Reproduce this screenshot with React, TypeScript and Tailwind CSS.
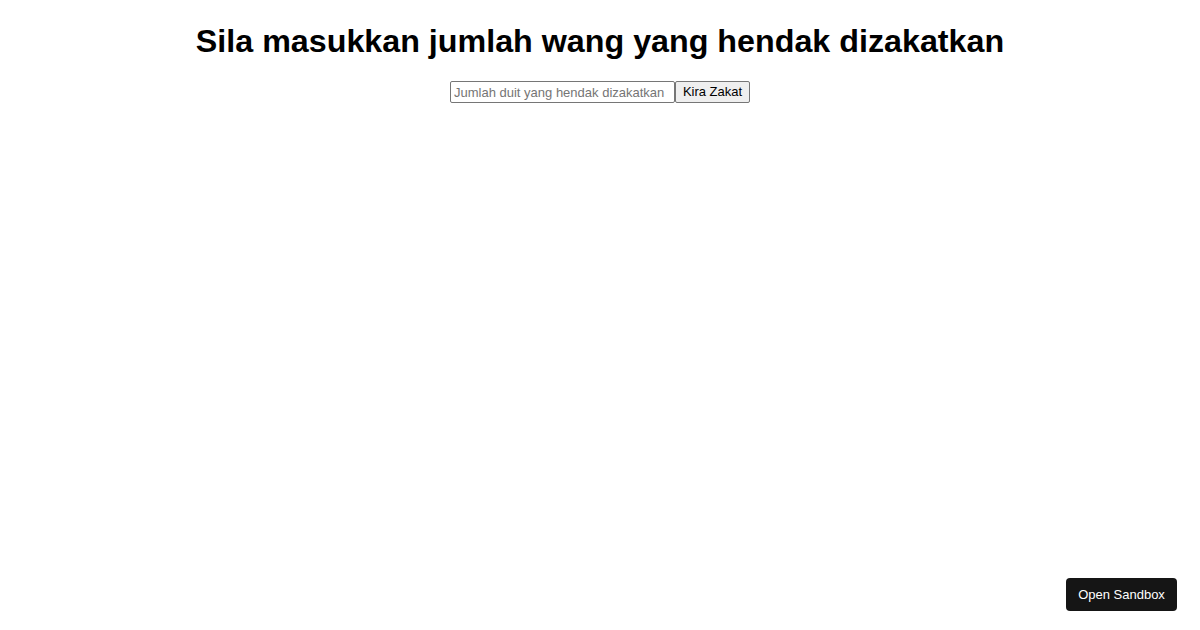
import React from "react";

export default function App() {
  return (
    <div className="min-h-[630px] bg-white text-black" style={{ fontFamily: '"Liberation Sans", Arial, sans-serif' }}>
      <div className="text-center">
        <h1 className="text-[32.25px] font-bold leading-[37px] pt-[23px] mb-[21px]">Sila masukkan jumlah wang yang hendak dizakatkan</h1>
        <div className="flex justify-center">
          <input
            placeholder="Jumlah duit yang hendak dizakatkan"
            className="w-[225px] h-[22px] border border-[#767676] px-[3px] text-[13px] leading-[16px] placeholder:text-[#757575] rounded-[2px] outline-none"
          />
          <button className="w-[75px] h-[22px] border border-[#767676] bg-[#efefef] rounded-[2px] text-[13px] leading-[16px] px-[6px]">
            Kira Zakat
          </button>
        </div>
      </div>
      <button className="fixed right-[23px] bottom-[19px] w-[111px] h-[33px] rounded-[4px] bg-[#151515] text-white text-[13px]">
        Open Sandbox
      </button>
    </div>
  );
}
